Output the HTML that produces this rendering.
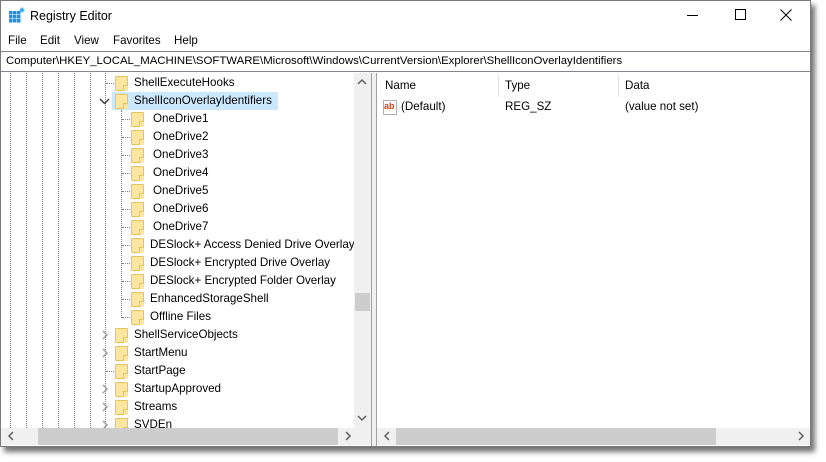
<!DOCTYPE html>
<html><head><meta charset="utf-8"><style>
*{margin:0;padding:0;box-sizing:border-box}
body{width:826px;height:462px;background:#fff;position:relative;overflow:hidden;font-family:"Liberation Sans",sans-serif;font-size:11.6px;color:#000}
.a{position:absolute}
.win{left:0;top:0;width:811px;height:447px;border:1px solid #7a7a7a;background:#fff;box-shadow:4px 5px 5px rgba(0,0,0,.55)}
.t{white-space:nowrap;line-height:18px}
.vd{border-left:1px dotted #808080;width:0}
.hd{border-top:1px dotted #808080;height:0}
.fo{width:13px;height:15px;background:#fde7a0;border:1px solid #e8c35a;border-radius:1px}
.fo:after{content:"";position:absolute;right:-1px;bottom:-1px;width:4px;height:5px;border-left:1px solid #e8c35a;border-top:1px solid #e8c35a;background:#fde7a0}
</style></head><body>
<div class="a win"></div>
<svg class="a" style="left:9px;top:7px" width="16" height="16" viewBox="0 0 16 16">
<g fill="#1e90e6"><rect x="0" y="4" width="3.5" height="3.5"/><rect x="4" y="4" width="3.5" height="3.5"/><rect x="8" y="4" width="3.5" height="3.5"/><rect x="0" y="8" width="3.5" height="3.5"/><rect x="4" y="8" width="3.5" height="3.5"/><rect x="8" y="8" width="3.5" height="3.5"/><rect x="0" y="12" width="3.5" height="3.5"/><rect x="4" y="12" width="3.5" height="3.5"/><rect x="8" y="12" width="3.5" height="3.5"/></g>
<rect x="11" y="1" width="4" height="4" fill="#3cb0f0" transform="rotate(45 13 3)"/></svg>
<div class="a t" style="left:30px;top:7px;font-size:12.5px">Registry Editor</div>
<div class="a" style="left:687px;top:15px;width:11px;border-top:1px solid #000"></div>
<div class="a" style="left:735px;top:9px;width:11px;height:11px;border:1px solid #000"></div>
<svg class="a" style="left:780px;top:9px" width="12" height="12"><path d="M0.5 0.5L11.5 11.5M11.5 0.5L0.5 11.5" stroke="#000" stroke-width="1"/></svg>
<div class="a t" style="left:8px;top:32px">File</div>
<div class="a t" style="left:40px;top:32px">Edit</div>
<div class="a t" style="left:74px;top:32px">View</div>
<div class="a t" style="left:113px;top:32px">Favorites</div>
<div class="a t" style="left:174px;top:32px">Help</div>
<div class="a" style="left:1px;top:51px;width:809px;height:21px;border-top:1px solid #828790;border-bottom:1px solid #828790"></div>
<div class="a t" style="left:6px;top:52px;font-size:11.4px">Computer\HKEY_LOCAL_MACHINE\SOFTWARE\Microsoft\Windows\CurrentVersion\Explorer\ShellIconOverlayIdentifiers</div>
<div class="a" style="left:371px;top:73px;width:6px;height:373px;background:#f0f0f0;border-left:1px solid #a0a0a0;border-right:1px solid #a0a0a0"></div>
<div class="a vd" style="left:10px;top:73px;height:355px"></div>
<div class="a vd" style="left:26px;top:73px;height:355px"></div>
<div class="a vd" style="left:42px;top:73px;height:355px"></div>
<div class="a vd" style="left:58px;top:73px;height:355px"></div>
<div class="a vd" style="left:74px;top:73px;height:355px"></div>
<div class="a vd" style="left:90px;top:73px;height:355px"></div>
<div class="a vd" style="left:105px;top:73px;height:355px"></div>
<div class="a vd" style="left:121px;top:110px;height:208px"></div>
<div class="a" style="left:112px;top:92px;width:166px;height:18px;background:#cce8ff"></div>
<div id="tree"></div>
<div class="a" style="left:354px;top:73px;width:17px;height:355px;background:#f0f0f0"></div>
<div class="a" style="left:355px;top:293px;width:15px;height:18px;background:#cdcdcd"></div>
<svg class="a" style="left:357px;top:78px" width="10" height="8"><path d="M1 6L5 2L9 6" stroke="#606060" stroke-width="1.5" fill="none"/></svg>
<svg class="a" style="left:357px;top:414px" width="10" height="8"><path d="M1 2L5 6L9 2" stroke="#606060" stroke-width="1.5" fill="none"/></svg>
<div class="a" style="left:1px;top:428px;width:370px;height:17px;background:#f0f0f0"></div>
<div class="a" style="left:38px;top:428px;width:300px;height:17px;background:#cdcdcd"></div>
<svg class="a" style="left:7px;top:431px" width="8" height="10"><path d="M6 1L2 5L6 9" stroke="#606060" stroke-width="1.5" fill="none"/></svg>
<svg class="a" style="left:344px;top:431px" width="8" height="10"><path d="M2 1L6 5L2 9" stroke="#606060" stroke-width="1.5" fill="none"/></svg>
<div class="a t" style="left:385px;top:77px">Name</div>
<div class="a t" style="left:505px;top:77px">Type</div>
<div class="a t" style="left:625px;top:77px">Data</div>
<div class="a" style="left:498px;top:75px;height:22px;border-left:1px solid #e5e5e5"></div>
<div class="a" style="left:618px;top:75px;height:22px;border-left:1px solid #e5e5e5"></div>
<div class="a" style="left:383px;top:100px;width:14px;height:15px;border:1px solid #b0b0b0;background:#fff"></div>
<div class="a" style="left:384px;top:100px;font-size:9px;font-weight:bold;color:#d0401a;line-height:12px">ab</div>
<div class="a t" style="left:401px;top:98px">(Default)</div>
<div class="a t" style="left:505px;top:98px">REG_SZ</div>
<div class="a t" style="left:625px;top:98px">(value not set)</div>
<div class="a" style="left:377px;top:428px;width:433px;height:17px;background:#f0f0f0"></div>
<div class="a" style="left:396px;top:428px;width:320px;height:17px;background:#cdcdcd"></div>
<svg class="a" style="left:383px;top:431px" width="8" height="10"><path d="M6 1L2 5L6 9" stroke="#606060" stroke-width="1.5" fill="none"/></svg>
<svg class="a" style="left:797px;top:431px" width="8" height="10"><path d="M2 1L6 5L2 9" stroke="#606060" stroke-width="1.5" fill="none"/></svg>
<script>
var rows=[
[1,"ShellExecuteHooks","d"],[1,"ShellIconOverlayIdentifiers","v"],
[2,"OneDrive1"],[2,"OneDrive2"],[2,"OneDrive3"],[2,"OneDrive4"],[2,"OneDrive5"],[2,"OneDrive6"],[2,"OneDrive7"],
[3,"DESlock+ Access Denied Drive Overlay"],[3,"DESlock+ Encrypted Drive Overlay"],[3,"DESlock+ Encrypted Folder Overlay"],[3,"EnhancedStorageShell"],[3,"Offline Files"],
[1,"ShellServiceObjects",">"],[1,"StartMenu",">"],[1,"StartPage","d"],[1,"StartupApproved",">"],[1,"Streams",">"],[1,"SVDEn",">"]];
var h="";
rows.forEach(function(r,i){var y=74+i*18;
 if(r[0]==1){var fx=115,tx=134;
  if(r[2]=="d")h+='<div class="a hd" style="left:106px;top:'+(y+9)+'px;width:8px"></div>';
  if(r[2]==">")h+='<svg class="a" style="left:101px;top:'+(y+4)+'px" width="8" height="10"><path d="M2 1L6 5L2 9" stroke="#a0a0a0" stroke-width="1.5" fill="none"/></svg>';
  if(r[2]=="v")h+='<svg class="a" style="left:99px;top:'+(y+6)+'px" width="11" height="7"><path d="M1 1L5.5 5.5L10 1" stroke="#404040" stroke-width="1.5" fill="none"/></svg>';
 }else{var fx=131,tx=(r[0]==2?153:150);h+='<div class="a hd" style="left:122px;top:'+(y+9)+'px;width:8px"></div>';}
 h+='<div class="a fo" style="left:'+fx+'px;top:'+(y+2)+'px"></div><div class="a t" style="left:'+tx+'px;top:'+y+'px">'+r[1]+'</div>';});
document.getElementById("tree").innerHTML=h;
</script>
</body></html>
